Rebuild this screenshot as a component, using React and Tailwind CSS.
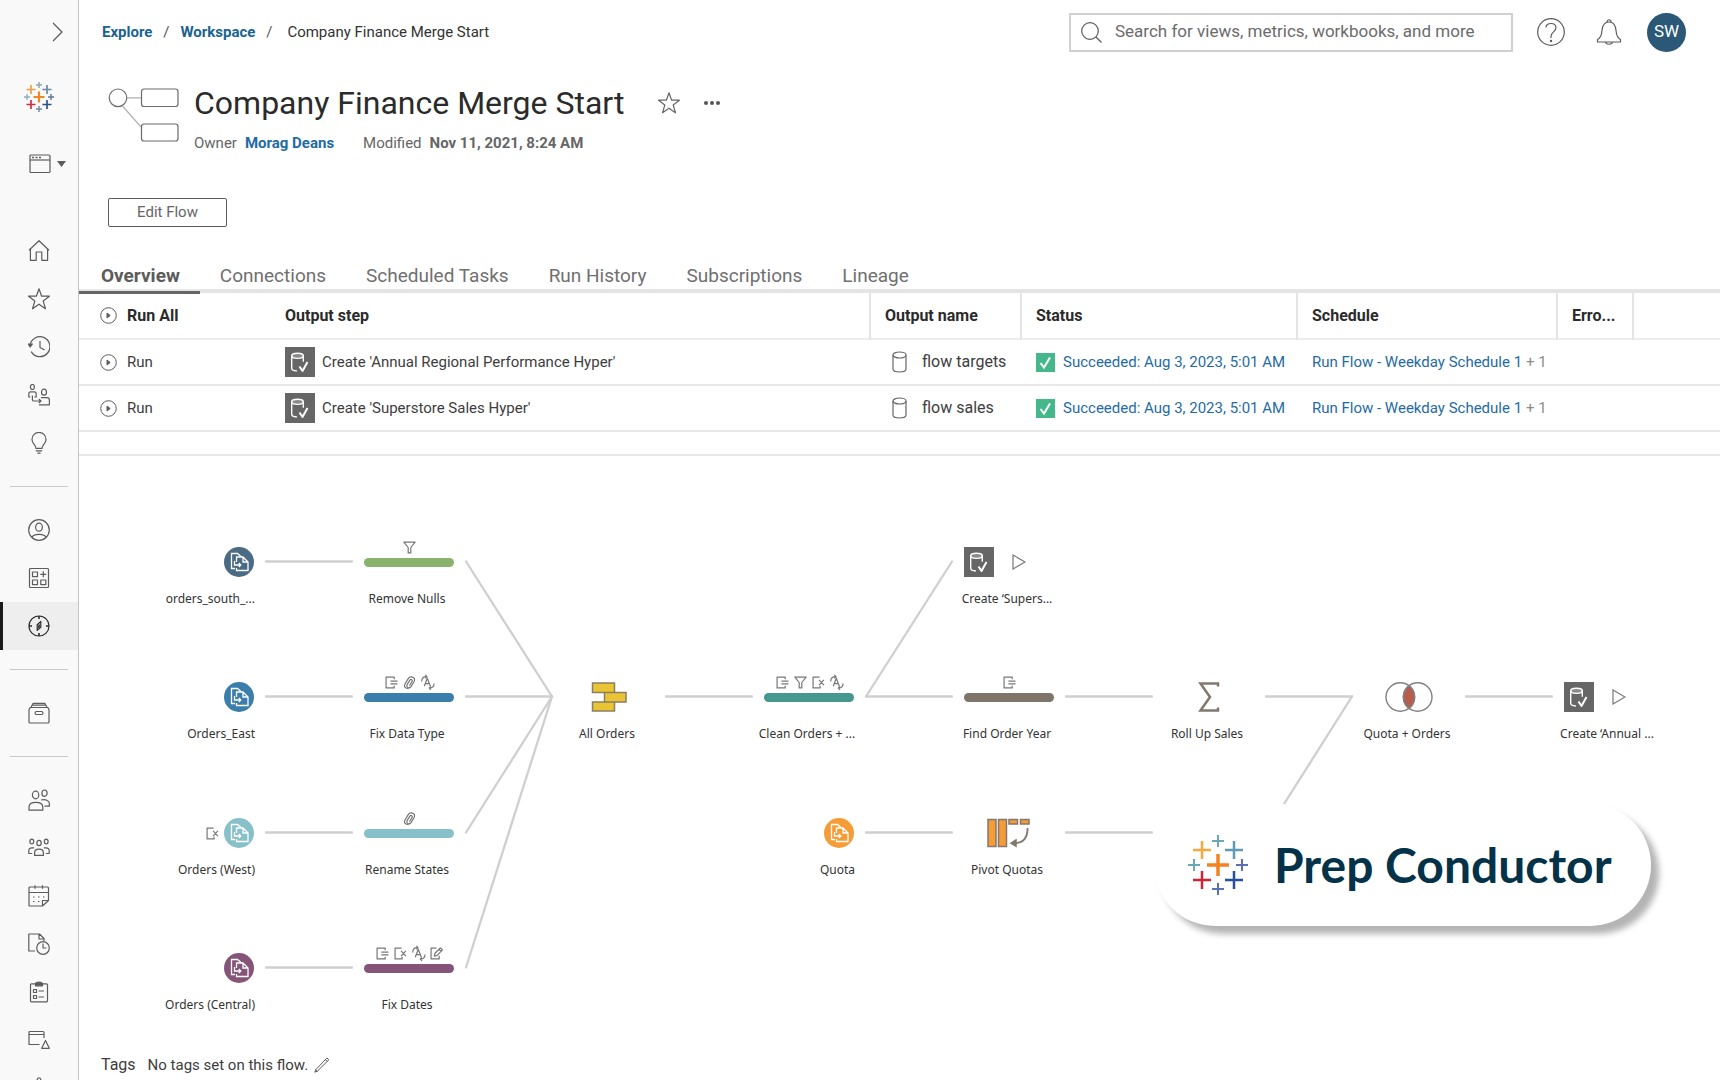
import React from 'react';

const NAV_GROUPS = [
  ['home', 'favorites', 'recents', 'shared', 'recommendations'],
  ['personal', 'collections', 'explore'],
  ['external'],
  ['users', 'groups', 'schedules', 'jobs', 'tasks', 'status', 'settings']
];

const TABS = ['Overview', 'Connections', 'Scheduled Tasks', 'Run History', 'Subscriptions', 'Lineage'];

const OUTPUTS = [
  { step: "Create 'Annual Regional Performance Hyper'", name: 'flow targets' },
  { step: "Create 'Superstore Sales Hyper'", name: 'flow sales' }
];

// Flow nodes, placed by column and row of the canvas
const NODES = [
  { col: 0, row: 0, kind: 'source', color: '#4a6a85', label: 'orders_south_...' },
  { col: 0, row: 1, kind: 'source', color: '#3b7dab', label: 'Orders_East' },
  { col: 0, row: 2, kind: 'source', color: '#88c0c9', label: 'Orders (West)', badges: ['drop'] },
  { col: 0, row: 3, kind: 'source', color: '#855478', label: 'Orders (Central)' },
  { col: 1, row: 0, kind: 'clean', color: '#89b26c', label: 'Remove Nulls', badges: ['filter'] },
  { col: 1, row: 1, kind: 'clean', color: '#3b7dab', label: 'Fix Data Type', badges: ['calc', 'clip', 'type'] },
  { col: 1, row: 2, kind: 'clean', color: '#88c0c9', label: 'Rename States', badges: ['clip'] },
  { col: 1, row: 3, kind: 'clean', color: '#855478', label: 'Fix Dates', badges: ['calc', 'drop', 'type', 'edit'] },
  { col: 2, row: 1, kind: 'union', label: 'All Orders' },
  { col: 3, row: 1, kind: 'clean', color: '#46988f', label: 'Clean Orders + ...', badges: ['calc', 'filter', 'drop', 'type'] },
  { col: 4, row: 0, kind: 'output', label: 'Create ‘Supers...' },
  { col: 4, row: 1, kind: 'clean', color: '#7e7469', label: 'Find Order Year', badges: ['calc'] },
  { col: 5, row: 1, kind: 'aggregate', label: 'Roll Up Sales' },
  { col: 6, row: 1, kind: 'join', label: 'Quota + Orders' },
  { col: 7, row: 1, kind: 'output', label: 'Create ‘Annual ...' },
  { col: 3, row: 2, kind: 'source', color: '#f69c36', label: 'Quota' },
  { col: 4, row: 2, kind: 'pivot', label: 'Pivot Quotas' }
];

// [column, from row, to row]
const EDGES = [
  [0, 0, 0], [0, 1, 1], [0, 2, 2], [0, 3, 3],
  [1, 0, 1], [1, 1, 1], [1, 2, 1], [1, 3, 1],
  [2, 1, 1], [3, 1, 0], [3, 1, 1], [3, 2, 2],
  [4, 1, 1], [4, 2, 2], [5, 1, 1], [5, 2, 1], [6, 1, 1]
];

const COL_WIDTH = 200;
const ROW_TOPS = [91, 226, 362, 497];

const Icon = ({ size = 22, box = 22, stroke = 1.2, className = '', children }) => (
  <svg
    width={size}
    height={size}
    viewBox={`0 0 ${box} ${box}`}
    fill="none"
    stroke="currentColor"
    strokeWidth={stroke}
    strokeLinejoin="round"
    className={`shrink-0 ${className}`}
    aria-hidden="true"
  >
    {children}
  </svg>
);

const NAV_ICONS = {
  home: <path d="M1 10.3L11 .7l10 9.6M2.4 9.1v11.200h5.800v-8.300h5.600v8.300h5.800V9.100" />,
  favorites: <path d="M11 .8l2.6 7.4h7.8l-6.2 4.8 2.3 7.8L11 16.2l-6.5 4.6L6.8 13 .6 8.2h7.8z" />,
  recents: (
    <>
      <path d="M2 9.4A10 10 0 1 1 3.2 15.6M12 5v6.4l4.6 2.6" />
      <path d="M.2 8l2 3 2.2-3z" fill="currentColor" />
    </>
  ),
  shared: (
    <>
      <ellipse cx="4.4" cy="3" rx="2" ry="2.5" />
      <path d="M2.4 13H.8V9.8q0-2 2-2h3.400q2 0 2 2V13H6.400" />
      <path d="M4.400 11.500v3.900q0 1.600 1.600 1.600h6.500M10.800 15l2.200 2-2.200 2" />
      <ellipse cx="16" cy="8.200" rx="2.500" ry="3" />
      <path d="M11 20.800h10.400V16q0-2.400-2.400-2.400h-6" />
    </>
  ),
  recommendations: (
    <>
      <path d="M8 16.400c0-3.600-4-4.800-4-9a7 7 0 0 1 14 0c0 4.200-4 5.400-4 9z" />
      <path d="M7.800 18.800h6.400M9.400 21.200h3.200" />
    </>
  ),
  personal: (
    <>
      <circle cx="11" cy="11" r="10.300" />
      <ellipse cx="11" cy="8.200" rx="3.400" ry="4" />
      <path d="M4 18.600c.6-2.400 3-3.200 7-3.200s6.400.8 7 3.200" />
    </>
  ),
  collections: (
    <>
      <rect x="1.500" y="1.500" width="19" height="19" rx="1" />
      <path d="M4.500 5h5v4.600h-5zM4.500 13h5v4.600h-5zM12.800 13h5v4.600h-5zM15.300 4.300v6M12.300 7.300h6" />
    </>
  ),
  explore: (
    <>
      <circle cx="11" cy="11" r="10" />
      <path d="M11 1v3M11 18v3M1 11h3M18 11h3" strokeWidth="1.600" />
      <path d="M12.800 6.500v5.800l-3.600 3V9.800z" />
      <path d="M11.400 9.500l-.8 3.500" strokeWidth="1.600" />
    </>
  ),
  external: (
    <>
      <path d="M1 8v12q0 1 1 1h18q1 0 1-1V8q0-1.500-1.500-2.500H2.500Q1 6.500 1 8zM3 5.500l1-2.300h14l1 2.300M4.500 3L5 1.400h12l.5 1.600" />
      <rect x="7" y="9.500" width="8" height="3" rx="1.500" />
    </>
  ),
  users: (
    <>
      <ellipse cx="7.600" cy="6" rx="3.200" ry="3.800" />
      <path d="M1 21.200v-3c0-3.200 2.800-4.800 6.800-4.800s7 1.600 7 4.800v3z" />
      <ellipse cx="16.500" cy="4.200" rx="2.600" ry="3.200" />
      <path d="M13 11c4.600-1 8.400.6 8.400 3.800v2.400h-5" />
    </>
  ),
  groups: (
    <>
      <ellipse cx="3.800" cy="4.600" rx="1.900" ry="2.400" />
      <ellipse cx="18.200" cy="4.600" rx="1.900" ry="2.400" />
      <ellipse cx="11" cy="6" rx="2.200" ry="2.600" />
      <path d="M6.600 18.400v-2.600c0-2.400 1.800-3.600 4.400-3.600s4.400 1.200 4.400 3.600v2.600zM4.200 16.500H.8v-2.700c0-2 1.200-3 3.200-3h2.200M17.800 16.500h3.400v-2.700c0-2-1.200-3-3.200-3h-2.200" />
    </>
  ),
  schedules: (
    <>
      <path d="M14.500 21H2q-1 0-1-1V3q0-1 1-1h17.500q1 0 1 1v12.500zM14.500 21v-5.500h6M1 7.500h19.500M7 .3v3.400M14.500 .3v3.400" />
      <path d="M5 12h12.500M5 16.500h7" strokeDasharray="1.500 3.500" />
    </>
  ),
  jobs: (
    <>
      <path d="M7 18H.8V1h10.700L16 5.500V8M11 1v5h5" />
      <circle cx="15" cy="15" r="6.300" />
      <path d="M15 10.500V15h3.400" />
    </>
  ),
  tasks: (
    <>
      <rect x="2.500" y="2.800" width="17" height="18" rx="1" />
      <path d="M7.500 4.800V2.500Q8 1 11 1t3.500 1.500v2.300z" fill="currentColor" />
      <path d="M5.500 8.500h3v3h-3zM5.500 14.500h3v3h-3zM10.500 10H16M10.500 16H16" />
    </>
  ),
  status: (
    <>
      <path d="M11.500 15.500H1v-12q0-1 1-1h13q1 0 1 1V9M1 5.500h15" />
      <path d="M17.500 11.500l3.800 7.800h-7.600z" />
    </>
  ),
  settings: <path d="M9 5V3l1-2h2l1 2v2l4 2-2 6H7L5 7z" />
};

const BADGES = {
  filter: <path d="M.8 1h10.400L7.200 6v5H4.800V6z" />,
  calc: <path d="M8.500 3V1H1v10h7.500V9M5 4.800h6.500M5 7.200h6.500" />,
  drop: <path d="M7 1H1v10h6.500V9M6.500 3.500l4.500 5M11 3.500l-4.500 5" />,
  clip: <path d="M1.600 7.800l3.200-5.400c2-3 7.200-1.400 5.600 2.400L7.600 9.600c-1.800 2.600-5 .6-3.800-1.600l2.400-4c1.200-1.600 3-.4 2.200 1L6 9M1.600 7.800c-1.200 3.200 2.600 4.600 4.600 2.800" />,
  type: (
    <>
      <path d="M3 9.500l2.800-7.500 2.800 7.500M4 7h3.600" />
      <path d="M.6 5C.8 1.600 3 .6 5 .6M4-1l1.600 1.600L4 2.200M12 7c0 3-2 4.200-4.200 4.200M9.200 9.600l-1.600 1.600 1.600 1.600" />
    </>
  ),
  edit: <path d="M6 1H1v10h7.500V8M4 8.500l.6-2.700L9.500.9l2 1.800-4.900 5zM8.200 2.200l2 1.800" />
};

const PLUSES = [
  { x: 30, y: 6, arm: 6, w: 2, mark: '#6aa7b8', small: '#8aa6b2' },
  { x: 14, y: 15, arm: 9, w: 2.5, mark: '#f5a93f', small: '#e8a04a' },
  { x: 46, y: 15, arm: 9, w: 2.5, mark: '#5b9db5', small: '#6887a3' },
  { x: 6, y: 30, arm: 6, w: 2, mark: '#6aa7b8', small: '#8fb0bb' },
  { x: 30, y: 30, arm: 11, w: 3.5, mark: '#f58220', small: '#ef8726' },
  { x: 54, y: 30, arm: 6, w: 2, mark: '#5b6fb5', small: '#5a759f' },
  { x: 14, y: 45, arm: 9, w: 2.5, mark: '#cf2338', small: '#cf2c40' },
  { x: 46, y: 45, arm: 9, w: 2.5, mark: '#26509b', small: '#2a4f86' },
  { x: 30, y: 54, arm: 6, w: 2, mark: '#5b6fb5', small: '#7289a8' }
];

const TableauMark = ({ size, tone }) => (
  <svg width={size} height={size} viewBox="0 0 60 60" className="shrink-0" aria-hidden="true">
    {PLUSES.map((p, index) => (
      <path
        key={index}
        d={`M${p.x - p.arm} ${p.y}h${p.arm * 2}M${p.x} ${p.y - p.arm}v${p.arm * 2}`}
        stroke={p[tone]}
        strokeWidth={tone === 'small' ? p.w + 0.8 : p.w}
      />
    ))}
  </svg>
);

const RunIcon = () => (
  <Icon size={17} box={17} stroke={1} className="text-[#5c5c5c]">
    <circle cx="8.500" cy="8.500" r="7.800" />
    <path d="M7 6l3.200 2.500L7 11z" fill="currentColor" />
  </Icon>
);

const OutputIcon = () => (
  <span className="flex size-[30px] shrink-0 items-center justify-center bg-[#666666] text-white">
    <Icon size={30} box={30} stroke={1.4}>
      <ellipse cx="12.500" cy="8.800" rx="5.800" ry="2.600" fill="#8a8a8a" />
      <path d="M6.700 8.800v12.400c0 1.500 2.600 2.600 5.200 2.800M18.300 8.800v6" />
      <path d="M14.500 19.500l3 4.500 5-9" strokeWidth="2" />
    </Icon>
  </span>
);

const Sidebar = () => (
  <aside className="flex w-[79px] shrink-0 flex-col overflow-hidden border-r border-[#c4c4c4] bg-[#f9f9f9] text-[#5c5c5c]">
    <button className="flex h-16 shrink-0 items-center justify-end pr-2.5" aria-label="Expand">
      <Icon stroke={1.300}>
        <path d="M7 2l9 9-9 9" />
      </Icon>
    </button>
    <a href="#" className="flex h-[66px] shrink-0 items-center justify-center" aria-label="Tableau">
      <TableauMark size={30} tone="small" />
    </a>
    <button className="mt-2.5 flex h-12 shrink-0 items-center gap-1.5 pl-[29px]" aria-label="Site">
      <Icon>
        <rect x="1" y="2" width="20" height="17.500" rx="1" />
        <path d="M1 7h20" />
        <path d="M3 4.500h9" strokeDasharray="2 1.500" strokeWidth="1.500" />
      </Icon>
      <svg width="9" height="6" viewBox="0 0 9 6" fill="#5c5c5c" aria-hidden="true">
        <path d="M0 0h9L4.500 6z" />
      </svg>
    </button>
    <nav className="mt-[39px] flex flex-col">
      {NAV_GROUPS.map((group, index) => (
        <React.Fragment key={index}>
          {index > 0 && <hr className="mx-2.5 my-[19px] border-[#c9c9c9]" />}
          {group.map(name => (
            <a
              key={name}
              href="#"
              aria-label={name}
              className={
                name === 'explore'
                  ? 'flex h-12 shrink-0 items-center justify-center border-l-[3px] border-[#1a1a1a] bg-[#eeeeee] pr-[3px] text-[#2b2b2b]'
                  : 'flex h-12 shrink-0 items-center justify-center'
              }
            >
              <Icon>{NAV_ICONS[name]}</Icon>
            </a>
          ))}
        </React.Fragment>
      ))}
    </nav>
  </aside>
);

const TopBar = () => (
  <header className="flex h-16 shrink-0 items-center pr-[34px] pl-[23px]">
    <nav className="flex items-center text-[15px] text-[#333333]" aria-label="Breadcrumb">
      <a href="#" className="font-bold text-[#1a6391]">Explore</a>
      <span className="w-7 text-center text-[#555555]">/</span>
      <a href="#" className="font-bold text-[#1a6391]">Workspace</a>
      <span className="w-7 text-center text-[#555555]">/</span>
      <span className="ml-1">Company Finance Merge Start</span>
    </nav>
    <label className="ml-auto flex h-[39px] w-[444px] items-center gap-3 border-2 border-[#d0d0d0] px-2.5 text-[#5c5c5c]">
      <Icon>
        <circle cx="9" cy="10" r="8.300" />
        <path d="M15 16l5.500 5.500" />
      </Icon>
      <input
        type="text"
        aria-label="Search"
        placeholder="Search for views, metrics, workbooks, and more"
        className="w-full text-[17px] placeholder-[#6b6b6b] outline-none"
      />
    </label>
    <button className="ml-6 text-[#5c5c5c]" aria-label="Help">
      <Icon size={28} box={28}>
        <circle cx="14" cy="14" r="13.300" />
        <path d="M9 9.500c0-2.500 2-4 5-4s5 1.700 5 4.200c0 3.800-5 4.500-5 8.500V20" />
        <circle cx="14" cy="23" r=".6" fill="currentColor" />
      </Icon>
    </button>
    <button className="ml-[30px] text-[#5c5c5c]" aria-label="Notifications">
      <Icon size={28} box={28}>
        <path d="M2.500 24v-2.500c3-1.500 4-3.500 4.500-9C7.500 6.500 10 4 14 4s6.500 2.500 7 8.500c.5 5.500 1.500 7.500 4.500 9V24zM12 4c0-3 4-3 4 0M10.500 24c.5 3 6.500 3 7 0" />
      </Icon>
    </button>
    <button className="ml-6 size-[39px] rounded-full bg-[#2a5876] text-[17px] text-white">SW</button>
  </header>
);

const FlowHeading = () => (
  <section className="flex shrink-0 gap-[15px] pt-[19px] pl-[29px]">
    <svg width="71" height="54" viewBox="0 0 71 54" fill="none" stroke="#6b6b6b" strokeWidth="1.200" className="mt-[5px]" aria-hidden="true">
      <circle cx="10" cy="9.800" r="8.800" />
      <rect x="33.500" y="1" width="36.500" height="17.500" rx="2.500" />
      <rect x="33.500" y="36" width="36.500" height="17" rx="2.500" />
      <path d="M19 9.800h14M14.500 18L33 39" stroke="#b0b0b0" />
    </svg>
    <div>
      <div className="flex h-10 items-center">
        <h1 className="text-[32px] leading-10 text-[#2b2b2b]">Company Finance Merge Start</h1>
        <button className="ml-[34px] text-[#666666]" aria-label="Favorite">
          <Icon>{NAV_ICONS.favorites}</Icon>
        </button>
        <button className="ml-6 flex gap-0.5" aria-label="More actions">
          <span className="size-1 rounded-full bg-[#555555]" />
          <span className="size-1 rounded-full bg-[#555555]" />
          <span className="size-1 rounded-full bg-[#555555]" />
        </button>
      </div>
      <p className="mt-2.5 flex text-[15px] leading-5 text-[#666666]">
        Owner
        <a href="#" className="ml-2 font-bold text-[#1f6ba3]">Morag Deans</a>
        <span className="ml-[29px]">Modified</span>
        <span className="ml-2 font-bold">Nov 11, 2021, 8:24 AM</span>
      </p>
    </div>
  </section>
);

const Tabs = () => (
  <nav className="mt-[22px] flex h-11 shrink-0 border-b-4 border-[#e4e4e4]">
    {TABS.map((tab, index) => (
      <button
        key={tab}
        className={
          index === 0
            ? '-mb-[5px] border-b-[3px] border-[#666666] pt-3 pr-5 pl-[22px] text-[19px] font-bold text-[#5c5c5c]'
            : '-mb-[5px] border-b-[3px] border-transparent px-5 pt-3 text-[19px] text-[#707070]'
        }
      >
        {tab}
      </button>
    ))}
  </nav>
);

const OutputTable = () => (
  <div className="shrink-0 border-b-2 border-[#e8e8e8] pb-[22px]">
    <table className="w-full table-fixed text-left text-[15px] text-[#3d3d3d]">
      <colgroup>
        <col className="w-[206px]" />
        <col className="w-[585px]" />
        <col className="w-[151px]" />
        <col className="w-[276px]" />
        <col className="w-[260px]" />
        <col className="w-[76px]" />
        <col />
      </colgroup>
      <thead>
        <tr className="h-[46px] border-b-2 border-[#ececec] text-[16px] text-[#2b2b2b]">
          <th className="pl-[21px]">
            <button className="flex items-center gap-2.5 font-bold">
              <RunIcon />
              Run All
            </button>
          </th>
          <th>Output step</th>
          <th className="border-l-2 border-[#e4e4e4] pl-3.5">Output name</th>
          <th className="border-l-2 border-[#e4e4e4] pl-3.5">Status</th>
          <th className="border-l-2 border-[#e4e4e4] pl-3.5">Schedule</th>
          <th className="border-x-2 border-[#e4e4e4] pl-3.5">Erro...</th>
          <th />
        </tr>
      </thead>
      <tbody>
        {OUTPUTS.map(output => (
          <tr key={output.name} className="h-[46px] border-b-2 border-[#e8e8e8]">
            <td className="pl-[21px]">
              <button className="flex items-center gap-2.5">
                <RunIcon />
                Run
              </button>
            </td>
            <td>
              <div className="flex items-center gap-[7px]">
                <OutputIcon />
                {output.step}
              </div>
            </td>
            <td className="pl-[22px]">
              <div className="flex items-center gap-3.5 text-[16px] whitespace-nowrap">
                <svg width="16" height="22" viewBox="0 0 16 22" fill="none" stroke="#666666" strokeWidth="1.200" aria-hidden="true">
                  <ellipse cx="7.500" cy="4" rx="6.500" ry="3" />
                  <path d="M1 4v14c0 4 13 4 13 0V4" />
                </svg>
                {output.name}
              </div>
            </td>
            <td className="pl-[15px]">
              <div className="flex items-center gap-2 whitespace-nowrap">
                <svg width="19" height="19" viewBox="0 0 19 19" fill="none" aria-hidden="true">
                  <path d="M0 0h19v19H0z" fill="#45b88b" />
                  <path d="M4.500 10L8 14.500l6-10" stroke="#ffffff" strokeWidth="2" />
                </svg>
                <a href="#" className="text-[#1f6ba3]">Succeeded: Aug 3, 2023, 5:01 AM</a>
              </div>
            </td>
            <td className="pl-[15px] whitespace-nowrap">
              <a href="#" className="text-[#1f6ba3]">Run Flow - Weekday Schedule 1</a>
              <span className="ml-1 text-[#8c8c8c]">+ 1</span>
            </td>
            <td />
            <td />
          </tr>
        ))}
      </tbody>
    </table>
  </div>
);

const NodeSymbol = ({ kind, color }) => {
  if (kind === 'source') {
    return (
      <svg width="30" height="30" viewBox="0 0 30 30" fill="none" stroke="#ffffff" strokeWidth="1.300" aria-hidden="true">
        <circle cx="15" cy="15" r="15" fill={color} stroke="none" />
        <path d="M11 21.500H7.500v-15h6l4 3.500" />
        <path d="M12.500 15v-5H19l5 5v8.500H12.500V21M19 10v5h5" />
        <path d="M10.500 14v4h6M14.800 16l2 2-2 2" />
      </svg>
    );
  }
  if (kind === 'clean') {
    return <span className="h-[9px] w-[90px] rounded-full" style={{ backgroundColor: color }} />;
  }
  if (kind === 'union') {
    return (
      <svg width="36" height="30" viewBox="0 0 36 30" fill="#eac435" stroke="#8a7f62" strokeWidth="1.500" aria-hidden="true">
        <path d="M1.500 1h22v9.500h-22zM13.500 10.500H35V20H13.500zM1.500 20h22v9h-22z" />
      </svg>
    );
  }
  if (kind === 'aggregate') {
    return (
      <svg width="24" height="32" viewBox="0 0 24 32" fill="none" stroke="#83786e" strokeWidth="2.500" aria-hidden="true">
        <path d="M21 5.500V2.500H3.500L13 16 3.500 29.500H21v-3" />
      </svg>
    );
  }
  if (kind === 'join') {
    return (
      <svg width="48" height="30" viewBox="0 0 48 30" fill="none" stroke="#808080" strokeWidth="1.400" aria-hidden="true">
        <path d="M24 3.600a14.300 14.300 0 0 1 0 22.800a14.300 14.300 0 0 1 0-22.800z" fill="#b85c4b" />
        <circle cx="15.300" cy="15" r="14.300" />
        <circle cx="32.700" cy="15" r="14.300" />
      </svg>
    );
  }
  if (kind === 'pivot') {
    return (
      <svg width="44" height="30" viewBox="0 0 44 30" fill="#f69c36" stroke="#83786e" strokeWidth="1.500" aria-hidden="true">
        <path d="M1 1.500h8v27H1zM11.500 1.500h8v27h-8zM22 1.500h8.500V6H22zM33.500 1.500H42V6h-8.500z" />
        <path d="M40.500 10c.5 9-4 15-12 15" fill="none" strokeWidth="1.800" />
        <path d="M29 22l-5 3.200 5 3z" fill="#83786e" />
      </svg>
    );
  }
  return (
    <>
      <OutputIcon />
      <svg width="14" height="16" viewBox="0 0 14 16" fill="none" stroke="#777777" strokeWidth="1.200" className="ml-[13px]" aria-hidden="true">
        <path d="M1 1l12 7-12 7z" />
      </svg>
    </>
  );
};

const FlowNode = ({ node }) => {
  const { kind, badges = [] } = node;
  const align = kind === 'source' ? 'justify-end' : kind === 'output' ? 'justify-start' : 'justify-center';
  const icons = badges.map(name => (
    <Icon key={name} size={13} box={12} stroke={1.1} className="overflow-visible">
      {BADGES[name]}
    </Icon>
  ));

  return (
    <div
      className="absolute w-[100px] text-[#777777]"
      style={{ left: 78 + node.col * COL_WIDTH, top: ROW_TOPS[node.row] }}
    >
      <div className={`relative flex h-[30px] items-center gap-[5px] pr-[3px] pl-[7px] ${align}`}>
        {kind === 'source' && icons}
        {kind === 'clean' && (
          <div className="absolute -top-1.5 right-[3px] left-[7px] flex justify-center gap-[5px]">{icons}</div>
        )}
        <NodeSymbol kind={kind} color={node.color} />
      </div>
      <p
        className={`mt-3.5 flex font-['Noto_Sans',sans-serif] text-[12px] leading-4 whitespace-nowrap text-[#333333] ${
          kind === 'source' ? 'justify-end pr-0.5' : 'justify-center'
        }`}
      >
        {node.label}
      </p>
    </div>
  );
};

const FlowCanvas = () => (
  <section className="relative flex-1" aria-label="Flow">
    <svg className="absolute inset-0 size-full" stroke="#cfcfcf" strokeWidth="2.300" strokeLinecap="round" aria-hidden="true">
      {EDGES.map(([col, from, to]) => (
        <line
          key={`${col}-${from}-${to}`}
          x1={187 + col * COL_WIDTH}
          y1={ROW_TOPS[from] + 14.5}
          x2={273 + col * COL_WIDTH}
          y2={ROW_TOPS[to] + 14.5}
        />
      ))}
    </svg>
    {NODES.map(node => (
      <FlowNode key={node.label} node={node} />
    ))}
    <div className="absolute top-[348px] left-[1075px] flex h-[122px] w-[497px] items-center gap-[26px] rounded-full bg-white pl-[34px] shadow-[8px_8px_6px_#b4b4b4]">
      <TableauMark size={60} tone="mark" />
      <strong className="font-['Lato',sans-serif] text-[48px] leading-none font-bold text-[#033249]">Prep Conductor</strong>
    </div>
  </section>
);

const App = () => (
  <div className="flex h-screen overflow-hidden bg-white font-['Roboto',sans-serif]">
    <Sidebar />
    <main className="flex min-w-0 flex-1 flex-col">
      <TopBar />
      <FlowHeading />
      <div className="mt-[45px] shrink-0 pl-[29px]">
        <button className="h-[29px] w-[119px] rounded-[2px] border border-[#5c5c5c] text-[15px] text-[#666666]">
          Edit Flow
        </button>
      </div>
      <Tabs />
      <OutputTable />
      <FlowCanvas />
      <footer className="flex h-[30px] shrink-0 items-center pl-[22px] text-[15px] text-[#3d3d3d]">
        <span className="text-[16px]">Tags</span>
        <span className="ml-3">No tags set on this flow.</span>
        <button className="ml-1.5 text-[#5c5c5c]" aria-label="Edit tags">
          <Icon size={16} box={16} stroke={1}>
            <path d="M.8 15.200l1-2.600L13 1l1.800 1.800L3.400 14.200zM11.400 2.600l1.800 1.800M1.800 12.600l1.600 1.600" />
          </Icon>
        </button>
      </footer>
    </main>
  </div>
);

export default App;
